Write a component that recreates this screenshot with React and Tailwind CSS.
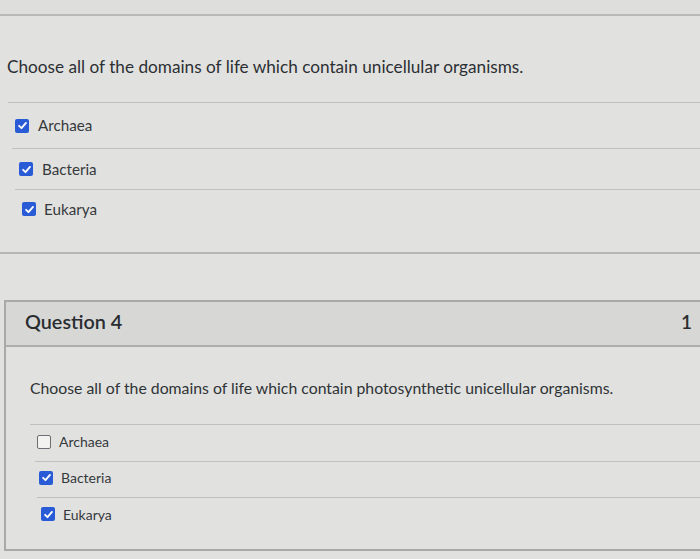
import React from "react";

function Box({ checked }) {
  if (!checked) {
    return (
      <span className="inline-block w-[14px] h-[14px] rounded-[2px] border-[1.5px] border-[#6b6f73] bg-[#f2f2f0] shrink-0" />
    );
  }
  return (
    <span className="inline-flex items-center justify-center w-[14px] h-[14px] rounded-[2px] bg-[#2a5bd7] shrink-0">
      <svg width="11" height="11" viewBox="0 0 12 12">
        <path d="M2.3 6.3 L4.9 8.9 L9.8 3.2" fill="none" stroke="white" strokeWidth="2" strokeLinecap="round" strokeLinejoin="round" />
      </svg>
    </span>
  );
}

function Option({ label, checked, className, textClass }) {
  return (
    <div className={"flex items-center " + className}>
      <Box checked={checked} />
      <span className={"text-[#36393c] " + textClass}>{label}</span>
    </div>
  );
}

function Rule({ className }) {
  return <div className={"h-[1px] bg-[#bfc0be] " + className} />;
}

export default function App() {
  return (
    <div
      className="w-[700px] h-[559px] overflow-hidden bg-[#e1e2e0] text-[#2f3336]"
      style={{ fontFamily: "Lato, 'Noto Sans', sans-serif" }}
    >
      <div className="h-[14px] bg-[#dedfdd]" />
      <div className="h-[2px] bg-[#b9bab8]" />
      <div className="pl-[7px] pt-[39px] h-[86px]">
        <p className="text-[17.2px] leading-[24px] text-[#2c2f33]">
          Choose all of the domains of life which contain unicellular organisms.
        </p>
      </div>
      <Rule className="ml-[8px]" />
      <Option label="Archaea" checked className="pl-[15px] gap-[9px] h-[45px]" textClass="text-[15.2px]" />
      <Rule className="ml-[12px]" />
      <Option label="Bacteria" checked className="pl-[19px] gap-[9px] h-[40px]" textClass="text-[15.2px]" />
      <Rule className="ml-[15px]" />
      <Option label="Eukarya" checked className="pl-[22px] gap-[8px] h-[38px]" textClass="text-[15.2px]" />
      <div className="h-[24px]" />
      <div className="h-[2px] bg-[#b6b7b5]" />
      <div className="h-[46px]" />
      <div className="ml-[4px] border-l-[2px] border-t-[2px] border-b-[2px] border-[#a9aaa8] flex flex-col pb-[17px]">
        <div className="h-[45px] bg-[#d7d8d6] border-b-[2px] border-[#aeafad] flex items-center justify-between pl-[19px] pr-[8px] pb-[3px]">
          <span className="text-[19.8px] font-semibold text-[#2a2d30]">Question 4</span>
          <span className="text-[19px] font-semibold text-[#2a2d30]">1</span>
        </div>
        <div className="pl-[24px] pt-[29px] h-[77px]">
          <p className="text-[15.8px] leading-[24px] text-[#2f3336]">
            Choose all of the domains of life which contain photosynthetic unicellular organisms.
          </p>
        </div>
        <Rule className="ml-[24px]" />
        <Option label="Archaea" className="pl-[31px] gap-[8px] h-[36px] pb-[3px]" textClass="text-[14px]" />
        <Rule className="ml-[29px]" />
        <Option label="Bacteria" checked className="pl-[33px] gap-[8px] h-[35px] pb-[4px]" textClass="text-[14px]" />
        <Rule className="ml-[31px]" />
        <Option label="Eukarya" checked className="pl-[35px] gap-[8px] h-[34px] pb-[2px]" textClass="text-[14px]" />
      </div>
    </div>
  );
}
